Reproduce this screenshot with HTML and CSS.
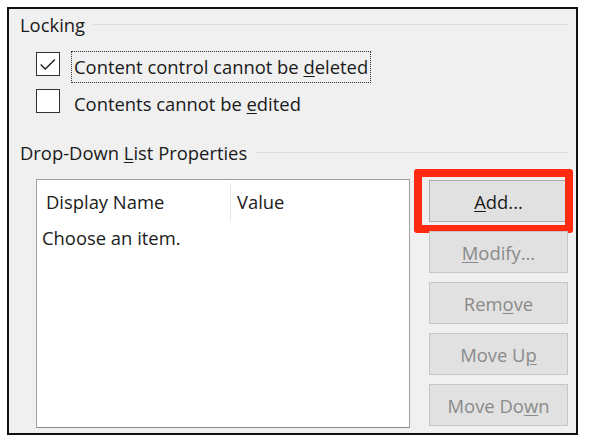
FILE: index.html
```html
<!DOCTYPE html>
<html lang="en">
<head>
<meta charset="utf-8">
<title>Content Control Properties</title>
<link rel="stylesheet" href="styles.css">
</head>
<body>
<div class="dialog">
  <div class="group-header"><span class="group-title">Locking</span><span class="group-rule"></span></div>
  <div class="check-row check-row-first">
    <span class="checkbox">
      <svg viewBox="0 0 24 24" width="22" height="22"><path d="M4 12.5 L9 17.5 L19.5 7" fill="none" stroke="#222" stroke-width="1.6"/></svg>
    </span>
    <span class="check-label focused">Content control cannot be <u>d</u>eleted</span>
  </div>
  <div class="check-row">
    <span class="checkbox"></span>
    <span class="check-label">Contents cannot be <u>e</u>dited</span>
  </div>
  <div class="group-header group-header-second"><span class="group-title">Drop-Down <u>L</u>ist Properties</span><span class="group-rule"></span></div>
  <div class="list-area">
    <div class="listbox">
      <div class="list-head">
        <span class="col col-name">Display Name</span>
        <span class="col col-value">Value</span>
      </div>
      <div class="list-item">Choose an item.</div>
    </div>
    <div class="buttons">
      <div class="btn btn-default"><u>A</u>dd...<span class="highlight"></span></div>
      <div class="btn btn-disabled"><u>M</u>odify...</div>
      <div class="btn btn-disabled">Rem<u>o</u>ve</div>
      <div class="btn btn-disabled">Move U<u>p</u></div>
      <div class="btn btn-disabled">Move Do<u>w</u>n</div>
    </div>
  </div>
</div>
</body>
</html>
```

FILE: styles.css
```css
html, body {
  margin: 0;
  padding: 0;
  background: #ffffff;
}

body {
  padding: 7px 0 0 7px;
  font-family: "Open Sans", "Noto Sans", "Liberation Sans", sans-serif;
  font-size: 18.4px;
  color: #1a1a1a;
}

.dialog {
  box-sizing: border-box;
  width: 571px;
  height: 428px;
  border: 2px solid #111;
  background: #f0f0f0;
  padding: 4px 8px 0 11px;
  display: flex;
  flex-direction: column;
}

.group-header {
  display: flex;
  align-items: center;
  height: 24px;
  line-height: 24px;
}

.group-header-second {
  margin-top: 21px;
}

.group-title {
  white-space: nowrap;
}

.group-rule {
  flex: 1;
  height: 1px;
  background: #dcdcdc;
  margin-left: 8px;
  margin-top: -1px;
}

.check-row {
  display: flex;
  align-items: flex-start;
  height: 32px;
  margin-top: 5px;
  padding-left: 16px;
}

.check-row-first {
  margin-top: 14px;
}

.checkbox {
  box-sizing: border-box;
  width: 24px;
  height: 24px;
  margin-top: 1px;
  border: 1px solid #333;
  background: #fff;
  display: flex;
  align-items: center;
  justify-content: center;
  flex: none;
}

.check-label {
  box-sizing: border-box;
  height: 32px;
  line-height: 30px;
  margin-left: 11px;
  padding: 0 2px;
  border: 1px solid transparent;
  white-space: nowrap;
}

.check-label.focused {
  border: 1px dotted #333;
}

u {
  text-decoration: underline;
  text-underline-offset: 2px;
}

.list-area {
  display: flex;
  margin-top: 14px;
  padding-left: 16px;
}

.listbox {
  box-sizing: border-box;
  width: 374px;
  height: 249px;
  background: #fff;
  border: 1px solid #a0a0a0;
  border-bottom-color: #8a8a8a;
  padding-top: 3px;
}

.list-head {
  display: flex;
  height: 38px;
  line-height: 38px;
}

.col {
  white-space: nowrap;
}

.col-name {
  width: 194px;
  padding-left: 9px;
  border-right: 1px solid #e5e5e5;
  box-sizing: border-box;
}

.col-value {
  padding-left: 6px;
}

.list-item {
  padding-left: 5px;
  line-height: 34px;
}

.buttons {
  display: flex;
  flex-direction: column;
  gap: 9px;
  margin-left: 19px;
  padding-top: 1px;
}

.btn {
  position: relative;
  box-sizing: border-box;
  width: 139px;
  height: 42px;
  display: flex;
  align-items: center;
  justify-content: center;
  background: #e1e1e1;
  border: 1px solid #adadad;
  white-space: nowrap;
}

.btn-disabled {
  background: #e1e1e1;
  border-color: #c6c6c6;
  color: #8a8a8a;
}

.highlight {
  position: absolute;
  left: -16px;
  top: -12px;
  right: -6px;
  bottom: -12px;
  border: 8px solid #ff2a10;
  border-radius: 3px;
  pointer-events: none;
}
```
